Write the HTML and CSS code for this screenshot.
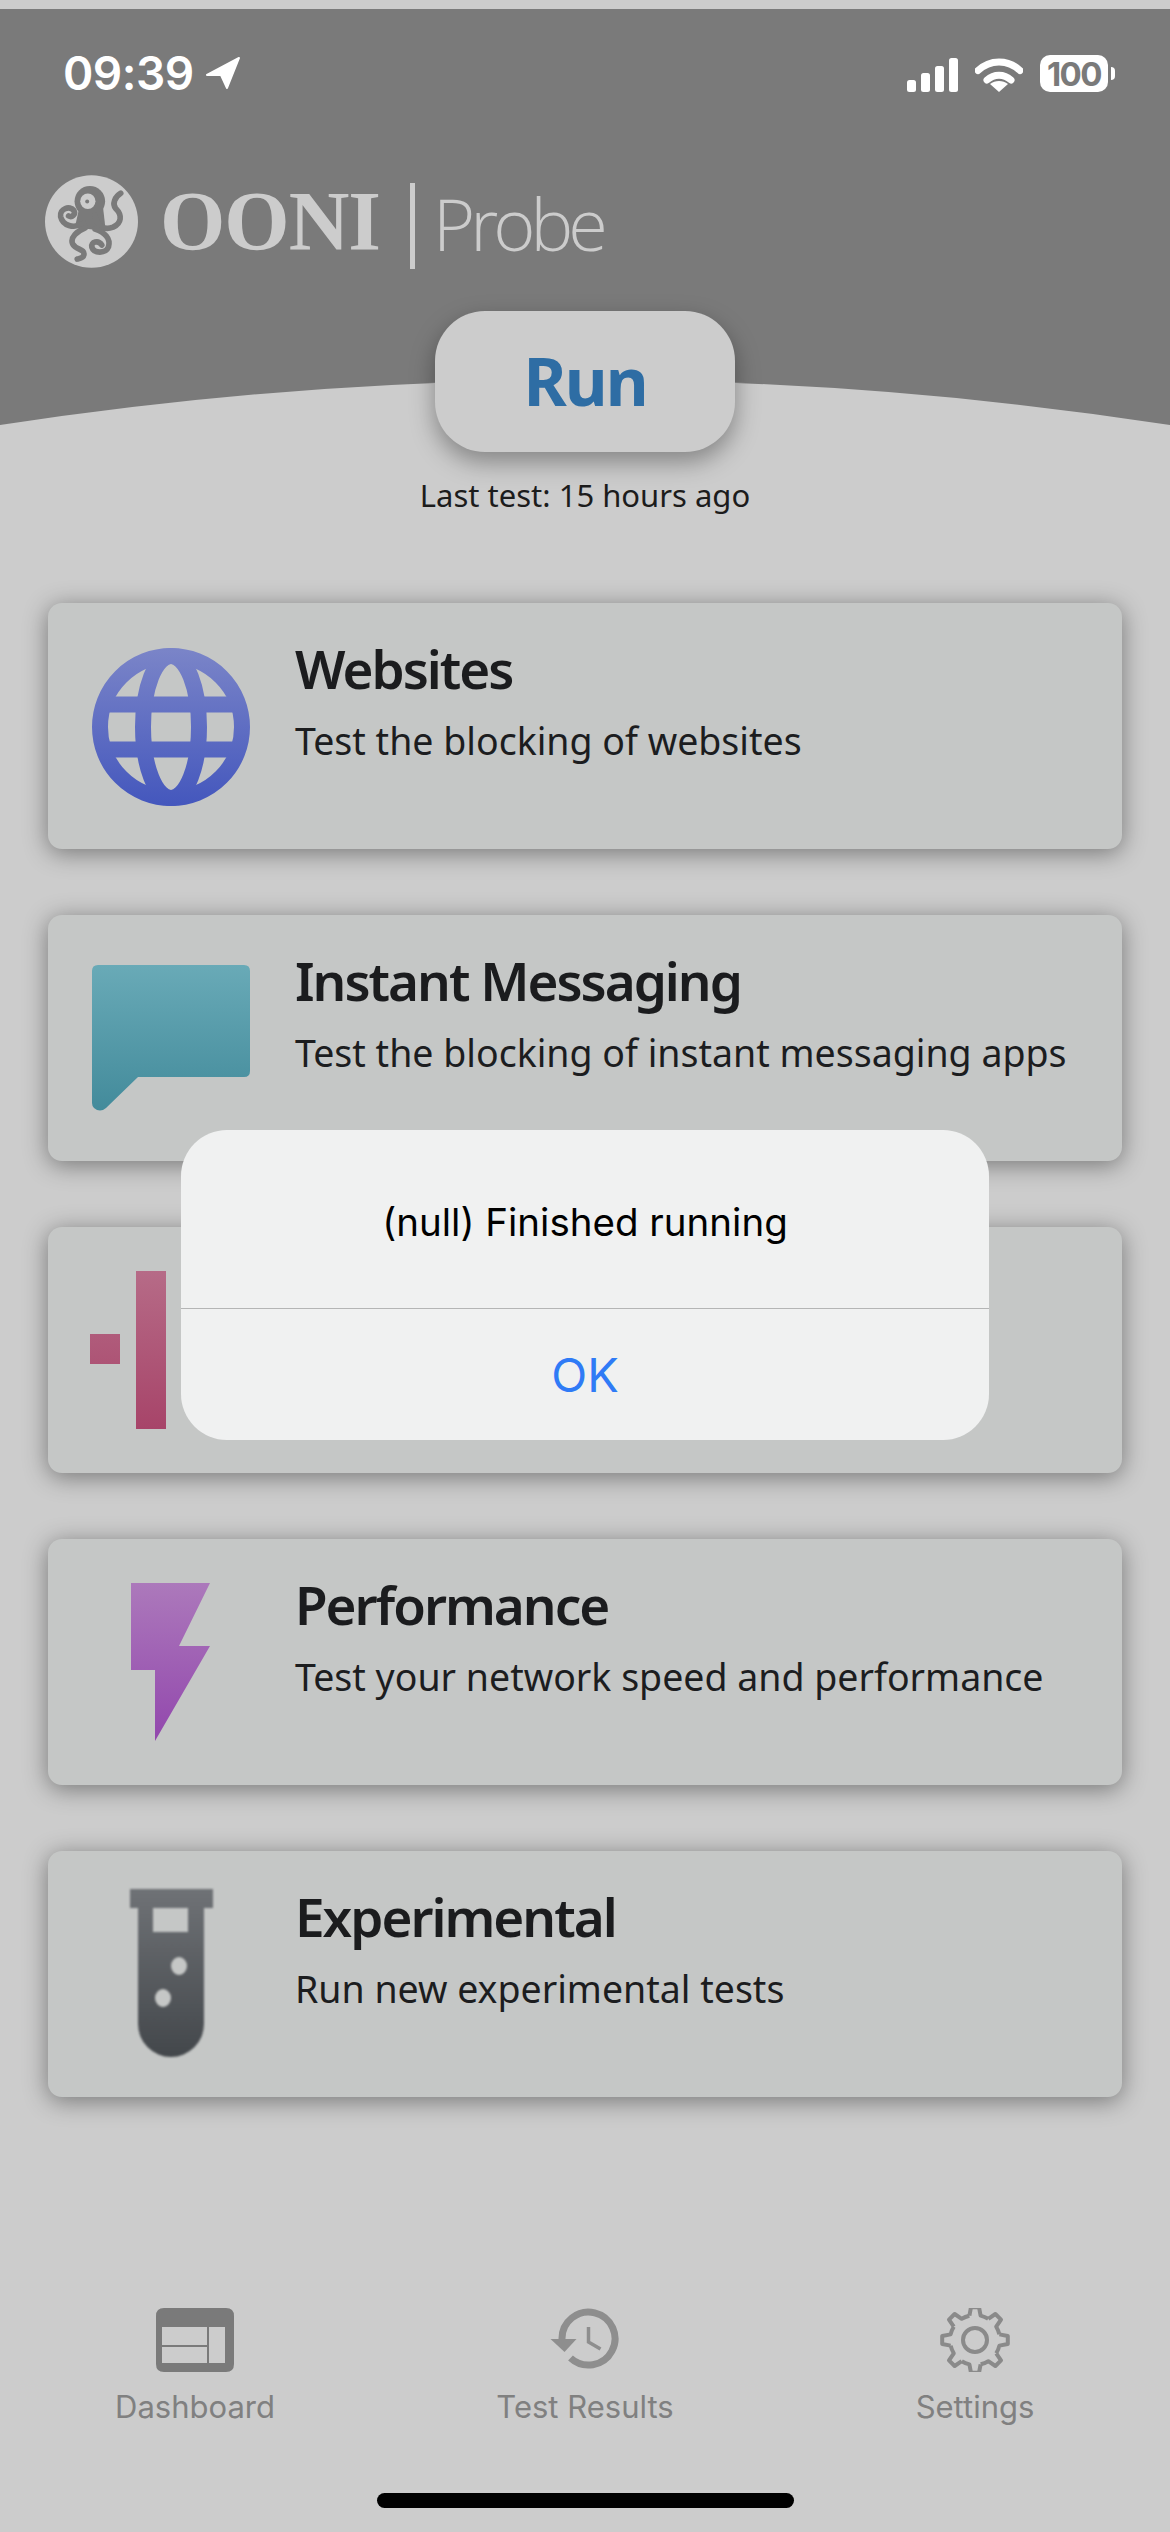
FILE: index.html
```html
<!DOCTYPE html>
<html lang="en">
<head>
<meta charset="utf-8">
<title>OONI Probe</title>
<link rel="stylesheet" href="styles.css">
</head>
<body>
<div class="screen">
  <header class="hero">
    <svg class="hero-curve" viewBox="0 0 1170 80" width="1170" height="80"><path d="M0 53Q585 -37 1170 53V80H0Z"/></svg>
    <div class="status">
      <div class="status-left">
        <span class="time">09:39</span>
        <svg class="loc" viewBox="0 0 36 35" width="36" height="35"><path d="M34 2L22 32L16 19H2Z"/></svg>
      </div>
      <div class="status-right">
        <svg class="signal" viewBox="0 0 51 34" width="51" height="34"><rect x="0" y="22" width="9" height="12" rx="2.500"/><rect x="14" y="15" width="9" height="19" rx="2.500"/><rect x="28" y="8" width="9" height="26" rx="2.500"/><rect x="42" y="0" width="9" height="34" rx="2.500"/></svg>
        <svg class="wifi" viewBox="0 0 48 34" width="48" height="34"><path class="wifi-arc" d="M3 12.500C15 1 33 1 45 12.500M12 22C19 15.500 29 15.500 36 22"/><path class="wifi-dot" d="M24 34L15 26C20 22 28 22 33 26Z"/></svg>
        <div class="battery"><span class="battery-fill">100</span><i class="battery-nub"></i></div>
      </div>
    </div>
    <div class="brand">
      <svg class="octopus" viewBox="75 72 280 278" width="93" height="93">
        <ellipse class="oct-bg" cx="215" cy="211" rx="140" ry="139"/>
        <circle class="oct-fill" cx="210" cy="150" r="46"/>
        <path class="oct-fill" d="M178 170L165 228L258 240L250 170Z"/>
        <path class="oct-arm" d="M192 216C160 235 128 222 122 196C118 172 150 162 162 178C168 190 156 200 146 194"/>
        <path class="oct-arm" d="M225 192C232 222 250 240 280 228C306 216 308 192 288 172C276 158 286 136 303 126"/>
        <path class="oct-arm" d="M196 230C172 240 150 258 158 278C168 298 196 292 192 312C190 322 180 322 172 324"/>
        <path class="oct-arm" d="M226 234C254 244 274 262 266 288C258 308 222 308 216 288C212 272 236 266 246 282"/>
        <circle class="oct-bg" cx="204" cy="150" r="23"/>
        <circle class="oct-fill" cx="202" cy="151" r="6"/>
      </svg>
      <span class="ooni">OONI</span>
      <i class="brand-rule"></i>
      <span class="probe">Probe</span>
    </div>
    <button class="run">Run</button>
  </header>
  <p class="last-test">Last test: 15 hours ago</p>
  <main class="cards">
    <article class="card">
      <svg class="card-icon" viewBox="0 0 158 158" width="158" height="158">
        <defs><linearGradient id="g1" gradientUnits="userSpaceOnUse" x1="0" y1="0" x2="0" y2="158"><stop offset="0" stop-color="#7b85c8"/><stop offset="1" stop-color="#4457bd"/></linearGradient></defs>
        <g class="globe" stroke="url(#g1)"><circle cx="79" cy="80" r="71"/><ellipse cx="79" cy="80" rx="28" ry="71"/><path d="M8 57.500H150M8 102.500H150"/></g>
      </svg>
      <div class="card-text"><h2>Websites</h2><p>Test the blocking of websites</p></div>
    </article>
    <article class="card">
      <svg class="card-icon" viewBox="0 0 158 158" width="158" height="158">
        <defs><linearGradient id="g2" gradientUnits="userSpaceOnUse" x1="0" y1="6" x2="0" y2="151"><stop offset="0" stop-color="#69aab7"/><stop offset="1" stop-color="#438b9b"/></linearGradient></defs>
        <path fill="url(#g2)" d="M6 6H152Q158 6 158 12V112Q158 118 152 118H46L14 149Q8 154 2 149Q0 147 0 144V12Q0 6 6 6Z"/>
      </svg>
      <div class="card-text"><h2>Instant Messaging</h2><p>Test the blocking of instant messaging apps</p></div>
    </article>
    <article class="card">
      <svg class="card-icon" viewBox="0 0 158 158" width="158" height="158">
        <defs><linearGradient id="g3" gradientUnits="userSpaceOnUse" x1="0" y1="0" x2="0" y2="158"><stop offset="0" stop-color="#b66b87"/><stop offset="1" stop-color="#a74469"/></linearGradient></defs>
        <path fill="url(#g3)" d="M-2 63H28V93H-2ZM44 0H74V158H44Z"/>
      </svg>
      <div class="card-text"></div>
    </article>
    <article class="card">
      <svg class="card-icon" viewBox="0 0 158 158" width="158" height="158">
        <defs><linearGradient id="g4" gradientUnits="userSpaceOnUse" x1="0" y1="0" x2="0" y2="158"><stop offset="0" stop-color="#ac79bb"/><stop offset="1" stop-color="#9247ad"/></linearGradient></defs>
        <path fill="url(#g4)" d="M39 0H118L87 63H118L63 158V87H39Z"/>
      </svg>
      <div class="card-text"><h2>Performance</h2><p>Test your network speed and performance</p></div>
    </article>
    <article class="card">
      <svg class="card-icon tube" viewBox="0 -6 158 170" width="158" height="170">
        <defs><linearGradient id="g5" gradientUnits="userSpaceOnUse" x1="0" y1="-6" x2="0" y2="162"><stop offset="0" stop-color="#6f7276"/><stop offset="1" stop-color="#43474b"/></linearGradient></defs>
        <path fill="url(#g5)" fill-rule="evenodd" d="M38 -6H121V13H112V129A33 33 0 0 1 46 129V13H38ZM61 13V37H96V13ZM87 62A8 9 0 0 0 87 80A8 9 0 0 0 87 62ZM71 94A8 9 0 0 0 71 112A8 9 0 0 0 71 94Z"/>
      </svg>
      <div class="card-text"><h2>Experimental</h2><p>Run new experimental tests</p></div>
    </article>
  </main>
  <nav class="tabs">
    <div class="tab">
      <svg class="tab-icon" viewBox="0 0 78 64" width="78" height="64"><path class="dash" fill-rule="evenodd" d="M8 0H70Q78 0 78 8V56Q78 64 70 64H8Q0 64 0 56V8Q0 0 8 0ZM6 19V37H51V19ZM6 39V55H51V39ZM53 19V55H69V19Z"/></svg>
      <span>Dashboard</span>
    </div>
    <div class="tab">
      <svg class="tab-icon" viewBox="0 0 78 64" width="78" height="64"><path class="hist-line" d="M16 31A26.500 26.500 0 1 1 24.500 50"/><path class="hist-arrow" d="M4.500 31H30.500L18.500 44Z"/><path class="hist-hand" d="M42.500 19V34L54.500 41"/></svg>
      <span>Test Results</span>
    </div>
    <div class="tab">
      <svg class="tab-icon" viewBox="-4 3 78 64" width="78" height="64">
        <defs><path id="gear-seg" d="M29.400 10.600L31 2.200H39L40.600 10.600A25 25 0 0 1 48.200 13.800"/></defs>
        <g class="gear"><use href="#gear-seg"/><use href="#gear-seg" transform="rotate(45 35 35)"/><use href="#gear-seg" transform="rotate(90 35 35)"/><use href="#gear-seg" transform="rotate(135 35 35)"/><use href="#gear-seg" transform="rotate(180 35 35)"/><use href="#gear-seg" transform="rotate(225 35 35)"/><use href="#gear-seg" transform="rotate(270 35 35)"/><use href="#gear-seg" transform="rotate(315 35 35)"/><circle cx="35" cy="35" r="12"/></g>
      </svg>
      <span>Settings</span>
    </div>
  </nav>
  <div class="home-bar"></div>
  <div class="alert" role="alertdialog">
    <div class="alert-msg">(null) Finished running</div>
    <div class="alert-btn">OK</div>
  </div>
</div>
</body>
</html>
```

FILE: styles.css
```css
* { box-sizing: border-box; }
html, body { margin: 0; padding: 0; }
body { background: #cccccc; }
.screen {
  position: relative;
  width: 1170px;
  height: 2532px;
  padding-top: 9px;
  overflow: hidden;
  background: #cccccc;
  display: flex;
  flex-direction: column;
  font-family: "Noto Sans", sans-serif;
}
.hero {
  position: relative;
  height: 443px;
  background: #7a7a7a;
  padding: 46px 0 0;
}
.hero-curve { position: absolute; left: 0; bottom: 0; display: block; fill: #cccccc; }
.status {
  position: relative;
  display: flex;
  justify-content: space-between;
  align-items: center;
  height: 37px;
  padding: 0 55px 0 63px;
}
.status-left, .status-right { display: flex; align-items: center; }
.time {
  font-family: Inter, sans-serif;
  font-weight: 600;
  font-size: 46px;
  line-height: 37px;
  letter-spacing: -0.5px;
  color: #ffffff;
}
.loc { margin-left: 11px; fill: #ffffff; stroke: #ffffff; stroke-width: 2; stroke-linejoin: round; }
.signal { fill: #ffffff; margin-top: 2px; }
.wifi { margin-left: 17px; margin-top: 2px; }
.wifi-arc { fill: none; stroke: #ffffff; stroke-width: 7; stroke-linecap: round; }
.wifi-dot { fill: #ffffff; }
.battery {
  position: relative;
  margin-left: 17px;
  margin-right: 7px;
  width: 68px;
  height: 37px;
  background: #ffffff;
  border-radius: 10px;
  display: flex;
  align-items: center;
  justify-content: center;
}
.battery-fill {
  font-family: Inter, sans-serif;
  font-weight: 700;
  font-size: 33px;
  letter-spacing: -1.5px;
  color: #7a7a7a;
}
.battery-nub {
  position: absolute;
  right: -7px;
  top: 12px;
  width: 4px;
  height: 13px;
  background: #ffffff;
  border-radius: 0 4px 4px 0;
}
.brand {
  position: relative;
  display: flex;
  align-items: center;
  height: 95px;
  margin-top: 82px;
  padding-left: 45px;
  color: #cccccc;
}
.octopus { display: block; flex: none; }
.oct-bg { fill: #cccccc; }
.oct-fill { fill: #7a7a7a; }
.oct-arm { fill: none; stroke: #7a7a7a; stroke-width: 17; stroke-linecap: round; stroke-linejoin: round; }
.ooni {
  margin-left: 22px;
  font-family: "Liberation Serif", serif;
  font-weight: 700;
  font-size: 84px;
  line-height: 95px;
  letter-spacing: -1px;
}
.brand-rule { display: block; width: 5px; height: 86px; margin: 8px 0 0 30px; background: #cccccc; }
.probe {
  margin-left: 18px;
  margin-top: 4px;
  font-family: "Open Sans", sans-serif;
  font-weight: 300;
  font-size: 72px;
  line-height: 95px;
  letter-spacing: -5px;
}
.run {
  position: relative;
  display: block;
  width: 300px;
  height: 141px;
  margin: 42px auto 0;
  border: 0;
  border-radius: 50px;
  background: #cccccc;
  box-shadow: 0 10px 24px rgba(0, 0, 0, 0.35);
  color: #2e6da4;
  font-family: "Noto Sans", sans-serif;
  font-weight: 700;
  font-size: 66px;
  line-height: 1;
  letter-spacing: -2px;
  padding: 0 0 4px;
}
.last-test {
  margin: 23px 0 0;
  height: 40px;
  text-align: center;
  font-size: 31px;
  line-height: 40px;
  color: #1c1c1c;
}
.cards {
  display: flex;
  flex-direction: column;
  gap: 66px;
  margin: 88px 48px 0;
}
.card {
  display: flex;
  gap: 45px;
  height: 246px;
  padding: 44px 0 0 44px;
  border-radius: 14px;
  background: #c5c7c6;
  box-shadow: 0 4px 24px rgba(0, 0, 0, 0.42);
}
.card-icon { display: block; flex: none; overflow: visible; }
.tube { filter: blur(1.2px); margin-top: -6px; }
.globe { fill: none; stroke-width: 16; }
.card-text { min-width: 0; margin-top: -8px; }
.card-text h2 {
  margin: 0;
  font-size: 53px;
  line-height: 60px;
  font-weight: 600;
  letter-spacing: -2px;
  color: #1b1c1e;
}
.card-text p {
  margin: 17px 0 0;
  font-size: 37.500px;
  line-height: 50px;
  color: #1c1d1f;
}
.tabs {
  display: flex;
  justify-content: space-between;
  margin-top: 211px;
  padding: 0 115px 0 115px;
  height: 120px;
}
.tab {
  display: flex;
  flex-direction: column;
  align-items: center;
  width: 160px;
  font-family: Inter, sans-serif;
  font-size: 31px;
  line-height: 40px;
  white-space: nowrap;
  color: #808080;
}
.tab-icon { display: block; flex: none; margin-bottom: 15px; }
.dash { fill: #7a7a7a; }
.hist-line { fill: none; stroke: #8e8e8e; stroke-width: 7; }
.hist-arrow { fill: #8e8e8e; }
.hist-hand { fill: none; stroke: #8e8e8e; stroke-width: 3.500; }
.gear { fill: none; stroke: #8a8a8a; stroke-width: 4; stroke-linejoin: round; }
.home-bar {
  position: absolute;
  left: 377px;
  top: 2493px;
  width: 417px;
  height: 15px;
  border-radius: 8px;
  background: #000000;
}
.alert {
  position: absolute;
  left: 181px;
  top: 1130px;
  width: 808px;
  height: 310px;
  border-radius: 46px;
  background: #f0f1f1;
  color: #000000;
  font-family: Inter, sans-serif;
  text-align: center;
}
.alert-msg {
  height: 179px;
  padding-top: 65px;
  font-size: 38.500px;
  line-height: 54px;
  border-bottom: 1px solid #b4b5b5;
}
.alert-btn {
  height: 130px;
  padding-top: 36px;
  font-size: 47px;
  line-height: 60px;
  color: #2f7bf6;
}
```
